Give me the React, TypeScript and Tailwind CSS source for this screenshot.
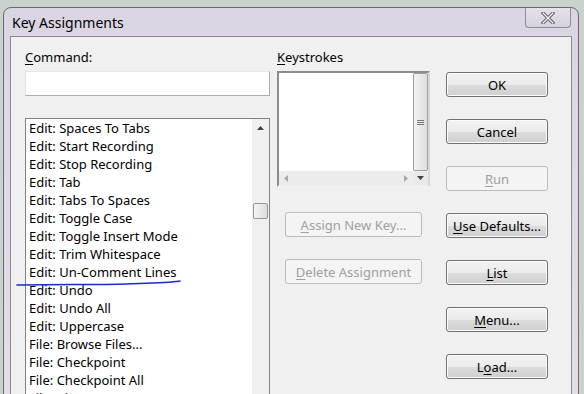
import React from "react";

const commands = [
  "Edit: Spaces To Tabs",
  "Edit: Start Recording",
  "Edit: Stop Recording",
  "Edit: Tab",
  "Edit: Tabs To Spaces",
  "Edit: Toggle Case",
  "Edit: Toggle Insert Mode",
  "Edit: Trim Whitespace",
  "Edit: Un-Comment Lines",
  "Edit: Undo",
  "Edit: Undo All",
  "Edit: Uppercase",
  "File: Browse Files...",
  "File: Checkpoint",
  "File: Checkpoint All",
  "File: Close",
];

function Mn({ children }: { children: React.ReactNode }) {
  return <span className="underline underline-offset-[2px]">{children}</span>;
}

function Btn({
  children,
  disabled,
  className = "",
}: {
  children: React.ReactNode;
  disabled?: boolean;
  className?: string;
}) {
  if (disabled) {
    return (
      <div
        className={`flex h-[25px] items-center justify-center rounded-[3px] border border-[#bcbcbc] bg-[#f4f4f4] text-[#a0a0a0] ${className}`}
      >
        {children}
      </div>
    );
  }
  return (
    <div
      className={`flex h-[25px] items-center justify-center rounded-[3px] border border-[#707070] bg-[linear-gradient(to_bottom,#f2f2f2_0%,#ebebeb_50%,#dddddd_51%,#cfcfcf_100%)] text-black shadow-[inset_0_0_0_1px_#fcfcfc] ${className}`}
    >
      {children}
    </div>
  );
}

export default function App() {
  return (
    <div
      className="h-[394px] w-[584px] overflow-hidden bg-[#c9d3cc] pl-[3px] pt-[7px] text-[13px] leading-[18px]"
      style={{ fontFamily: '"Noto Sans", "Noto Sans CJK SC", sans-serif' }}
    >
      <div className="h-[420px] w-[576px] rounded-t-[8px] border border-[#6b6a74] bg-[linear-gradient(to_bottom,#dbd5e2,#e3dfe8)] px-[6px]">
        {/* title bar */}
        <div className="flex h-[28px] items-start justify-between">
          <div className="pl-[2px] pt-[6px] text-[14px] leading-[18px] text-black">Key Assignments</div>
          <div className="mr-[1px] flex h-[20px] w-[46px] items-center justify-center rounded-b-[4px] border border-t-0 border-[#8e8c96] bg-[linear-gradient(to_bottom,#e6e2ea,#d6d1dc)]">
            <svg width="14" height="12" viewBox="0 0 14 12">
              <path
                d="M2 1 L12 11 M12 1 L2 11"
                stroke="#5a5a64"
                strokeWidth="3.2"
                strokeLinecap="square"
              />
              <path
                d="M2 1 L12 11 M12 1 L2 11"
                stroke="#f4f4f6"
                strokeWidth="1.3"
                strokeLinecap="square"
              />
            </svg>
          </div>
        </div>

        {/* client area */}
        <div className="flex h-[400px] border border-[#8b8994] bg-[#f0f0f0] pl-[14px] pt-[11px]">
          {/* left column */}
          <div className="flex w-[245px] flex-col">
            <div className="h-[23px] text-black">
              <Mn>C</Mn>ommand:
            </div>
            <div className="h-[25px] border border-[#abadb3] border-t-[#e3e9ef] border-l-[#e2e3ea] bg-white" />
            <div className="relative mt-[22px] flex flex-1 border border-[#828282] bg-white">
              <div className="flex-1 pl-[3px] pt-0">
                {commands.map((c) => (
                  <div key={c} className="h-[18px] whitespace-nowrap text-black">
                    {c}
                  </div>
                ))}
              </div>
              <div className="flex w-[17px] flex-col items-center bg-[#f0f0f0] pt-[7px]">
                <svg width="7" height="4" viewBox="0 0 7 4">
                  <path d="M0 4 L3.5 0 L7 4 Z" fill="#404040" />
                </svg>
                <div className="mt-[73px] h-[16px] w-[15px] rounded-[2px] border border-[#979797] bg-[linear-gradient(to_right,#f5f5f5,#dcdcdc)]" />
              </div>
              <svg
                className="absolute left-[-10px] top-[160px]"
                width="165"
                height="10"
                viewBox="0 0 165 10"
              >
                <path
                  d="M1 6 C 40 5, 80 6, 110 5 S 150 4, 164 2"
                  stroke="#1a2ad0"
                  strokeWidth="1.6"
                  fill="none"
                  strokeLinecap="round"
                />
              </svg>
            </div>
          </div>

          {/* middle column */}
          <div className="ml-[7px] flex w-[153px] flex-col">
            <div className="h-[23px] text-black">
              <Mn>K</Mn>eystrokes
            </div>
            <div className="flex h-[116px] flex-col border-[2px] border-[#8c8c8c] border-b-[#f0f0f0] border-r-[#d8d8d8] bg-white">
              <div className="flex flex-1">
                <div className="flex-1" />
                <div className="flex w-[15px] flex-col bg-[#e9e9e9]">
                  <div className="flex h-[98px] items-center justify-center rounded-[2px] border border-[#a0a0a0] bg-[linear-gradient(to_right,#f3f3f3,#dedede)]">
                    <svg width="7" height="7" viewBox="0 0 7 7">
                      <path d="M0 1.5 H7 M0 3.5 H7 M0 5.5 H7" stroke="#777" strokeWidth="1" />
                    </svg>
                  </div>
                </div>
              </div>
              <div className="flex h-[16px]">
                <div className="flex flex-1 items-center justify-between bg-[#ececec] px-[5px]">
                  <svg width="4" height="7" viewBox="0 0 4 7">
                    <path d="M4 0 L0 3.5 L4 7 Z" fill="#a8a8a8" />
                  </svg>
                  <svg width="4" height="7" viewBox="0 0 4 7">
                    <path d="M0 0 L4 3.5 L0 7 Z" fill="#a8a8a8" />
                  </svg>
                </div>
                <div className="flex w-[15px] items-center justify-center bg-[#e9e9e9]">
                  <svg width="7" height="4" viewBox="0 0 7 4">
                    <path d="M0 0 L7 0 L3.5 4 Z" fill="#404040" />
                  </svg>
                </div>
              </div>
            </div>
            <Btn disabled className="ml-[8px] mt-[25px] w-[137px]">
              <span>
                <Mn>A</Mn>ssign New Key...
              </span>
            </Btn>
            <Btn disabled className="ml-[8px] mt-[22px] w-[137px]">
              <span>
                <Mn>D</Mn>elete Assignment
              </span>
            </Btn>
          </div>

          {/* right column */}
          <div className="ml-[16px] flex w-[102px] flex-col gap-[22px] pt-[24px]">
            <Btn>OK</Btn>
            <Btn>Cancel</Btn>
            <Btn disabled>
              <span>
                <Mn>R</Mn>un
              </span>
            </Btn>
            <Btn>
              <span>
                <Mn>U</Mn>se Defaults...
              </span>
            </Btn>
            <Btn>
              <span>
                <Mn>L</Mn>ist
              </span>
            </Btn>
            <Btn>
              <span>
                <Mn>M</Mn>enu...
              </span>
            </Btn>
            <Btn>
              <span>
                L<Mn>o</Mn>ad...
              </span>
            </Btn>
          </div>
        </div>
      </div>
    </div>
  );
}
